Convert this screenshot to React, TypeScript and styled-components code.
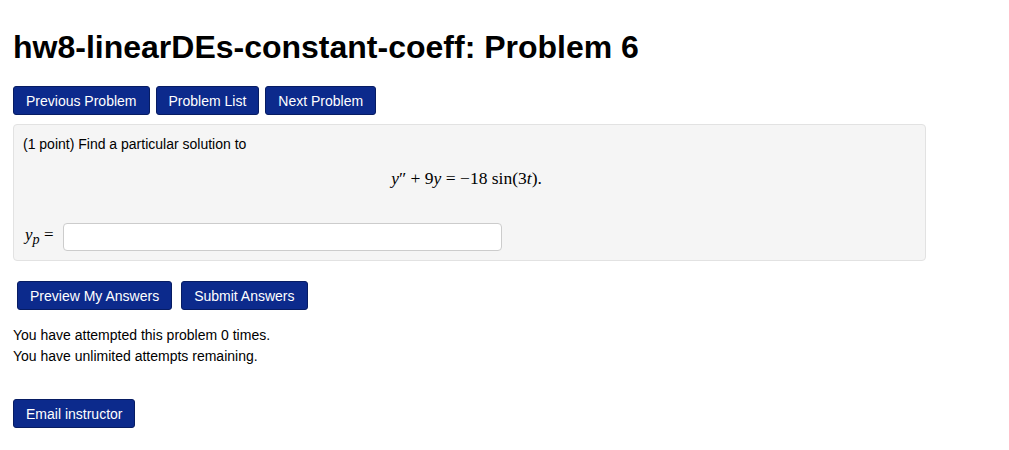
import React from "react";
import styled, { createGlobalStyle } from "styled-components";

const Global = createGlobalStyle`
  body {
    margin: 0;
    background: #fff;
    font-family: "Liberation Sans", Arial, Helvetica, sans-serif;
    color: #000;
  }
`;

const Page = styled.div`
  padding: 0 13px;
  width: 913px;
`;

const Title = styled.h1`
  font-size: 32px;
  font-weight: bold;
  margin: 28px 0 0;
  line-height: 38px;
`;

const NavBar = styled.div`
  display: flex;
  gap: 6px;
  margin-top: 20px;
`;

const Button = styled.button`
  height: 29px;
  padding: 0 12px;
  font-family: "Liberation Sans", Arial, sans-serif;
  font-size: 14px;
  color: #fff;
  background: #0c2a8c;
  border: 1px solid #071c63;
  border-radius: 3px;
  cursor: pointer;
`;

const ProblemBox = styled.div`
  margin-top: 9px;
  background: #f5f5f5;
  border: 1px solid #e2e2e2;
  border-radius: 4px;
  padding: 11px 9px 9px;
`;

const Prompt = styled.div`
  font-size: 14px;
  line-height: 16px;
`;

const Equation = styled.div`
  text-align: center;
  font-family: "Liberation Serif", "Times New Roman", serif;
  font-size: 17.5px;
  margin-top: 16px;
  padding-right: 6px;
  line-height: 20px;
  white-space: pre;
`;

const Var = styled.i`
  font-style: italic;
`;

const AnswerRow = styled.div`
  display: flex;
  align-items: center;
  gap: 10px;
  margin-top: 35px;
  padding-left: 2px;
`;

const AnswerLabel = styled.span`
  font-family: "Liberation Serif", "Times New Roman", serif;
  font-size: 17px;
  white-space: pre;
`;

const AnswerInput = styled.input`
  width: 439px;
  height: 28px;
  box-sizing: border-box;
  border: 1px solid #ccc;
  border-radius: 4px;
  background: #fff;
`;

const SubmitBar = styled.div`
  display: flex;
  gap: 9px;
  margin-top: 20px;
  padding-left: 4px;
`;

const Info = styled.div`
  margin-top: 15px;
  font-size: 14px;
  line-height: 21px;
`;

const EmailRow = styled.div`
  margin-top: 32px;
`;

export default function App() {
  return (
    <>
      <Global />
      <Page>
        <Title>hw8-linearDEs-constant-coeff: Problem 6</Title>
        <NavBar>
          <Button>Previous Problem</Button>
          <Button>Problem List</Button>
          <Button>Next Problem</Button>
        </NavBar>
        <ProblemBox>
          <Prompt>(1 point) Find a particular solution to</Prompt>
          <Equation>
            <Var>y</Var>″ + 9<Var>y</Var> = −18 sin(3<Var>t</Var>).
          </Equation>
          <AnswerRow>
            <AnswerLabel>
              <Var>y</Var>
              <sub>
                <Var>p</Var>
              </sub>
              {" ="}
            </AnswerLabel>
            <AnswerInput type="text" />
          </AnswerRow>
        </ProblemBox>
        <SubmitBar>
          <Button>Preview My Answers</Button>
          <Button>Submit Answers</Button>
        </SubmitBar>
        <Info>
          You have attempted this problem 0 times.
          <br />
          You have unlimited attempts remaining.
        </Info>
        <EmailRow>
          <Button>Email instructor</Button>
        </EmailRow>
      </Page>
    </>
  );
}
